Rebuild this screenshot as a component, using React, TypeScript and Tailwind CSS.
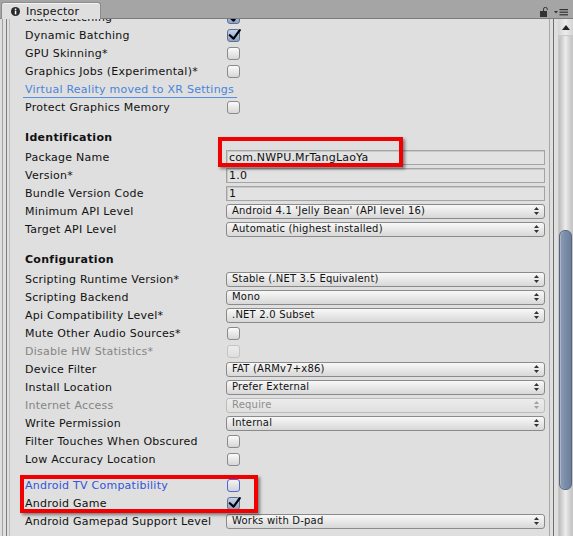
import React from "react";

const font = { fontFamily: '"DejaVu Sans", "Liberation Sans", sans-serif' };

function Arrows({ disabled }: { disabled?: boolean }) {
  const c = disabled ? "#a0a0a0" : "#333";
  return (
    <svg width="5" height="8" viewBox="0 0 5 8" className="shrink-0">
      <polygon points="0,3 2.5,0 5,3" fill={c} />
      <polygon points="0,5 2.5,8 5,5" fill={c} />
    </svg>
  );
}

function Check() {
  return (
    <svg width="13" height="13" viewBox="0 0 13 13" className="absolute -top-[1px] left-0">
      <path d="M1.8 6.2 L5.6 9.6 L11.8 1.2" fill="none" stroke="#000" strokeWidth="2.2" strokeLinecap="round" strokeLinejoin="round" />
    </svg>
  );
}

function Checkbox({ checked, disabled, blue }: { checked?: boolean; disabled?: boolean; blue?: boolean }) {
  if (checked) {
    return (
      <div className="relative ml-[1px] w-[13px] h-[13px] rounded-[3px] border border-[#5f6f8c] bg-gradient-to-b from-[#c4d2ec] to-[#8ea2c8]">
        <Check />
      </div>
    );
  }
  if (disabled) {
    return <div className="ml-[1px] w-[13px] h-[13px] rounded-[3px] border border-[#c4c4c4] bg-gradient-to-b from-[#ececec] to-[#dedede]" />;
  }
  if (blue) {
    return <div className="ml-[1px] w-[13px] h-[13px] rounded-[3px] border border-[#4a66e0] bg-gradient-to-b from-[#f2f2f2] to-[#d4d4d4]" />;
  }
  return <div className="ml-[1px] w-[13px] h-[13px] rounded-[3px] border border-[#8a8a8a] bg-gradient-to-b from-[#fbfbfb] to-[#d6d6d6]" />;
}

function Dropdown({ value, disabled }: { value: string; disabled?: boolean }) {
  return (
    <div
      className={`flex-1 h-[15px] rounded-[3px] border flex items-center justify-between pl-[5px] pr-[5px] text-[10px] leading-none ${
        disabled
          ? "border-[#bcbcbc] bg-gradient-to-b from-[#ececec] to-[#e0e0e0] text-[#8e8e8e]"
          : "border-[#8a8a8a] bg-gradient-to-b from-[#f8f8f8] to-[#d8d8d8] text-[#111]"
      }`}
    >
      <span className="whitespace-nowrap tracking-[0.2px]">{value}</span>
      <Arrows disabled={disabled} />
    </div>
  );
}

function Field({ value }: { value: string }) {
  return (
    <div className="flex-1 h-[15px] border border-[#a4a4a4] bg-[#e2e2e2] shadow-[inset_1px_1px_0_#c8c8c8] flex items-center pl-[2px] text-[11px] leading-none text-[#111]">
      <span className="whitespace-nowrap tracking-[0.2px]">{value}</span>
    </div>
  );
}

function Row({ label, labelClass, children }: { label: React.ReactNode; labelClass?: string; children?: React.ReactNode }) {
  return (
    <div className="flex items-center h-[18px]">
      <div className={`w-[201px] shrink-0 text-[11px] tracking-[0.25px] whitespace-nowrap leading-none ${labelClass ?? "text-[#111]"}`}>{label}</div>
      <div className="flex-1 flex items-center">{children}</div>
    </div>
  );
}

function Header({ text }: { text: string }) {
  return (
    <div className="h-[18px] flex items-center text-[11px] tracking-[0.3px] font-bold text-[#111] leading-none">{text}</div>
  );
}

export default function App() {
  return (
    <div className="relative w-[573px] h-[536px] overflow-hidden bg-[#dfdfdf] flex flex-col" style={font}>
      {/* tab bar */}
      <div className="relative h-[19px] shrink-0 bg-[#a5a5a5] border-b border-[#7c7c7c] flex items-end">
        <div className="relative z-10 ml-[1px] -mb-[1px] h-[17px] w-[100px] bg-[#dfdfdf] border border-b-0 border-[#8c8c8c] rounded-t-[3px] shadow-[inset_0_1px_0_#f4f4f4] flex items-center pl-[9px] gap-[6px]">
          <svg width="9" height="9" viewBox="0 0 9 9" className="shrink-0">
            <circle cx="4.5" cy="4.5" r="4.5" fill="#2a2a2a" />
            <rect x="3.8" y="1.6" width="1.5" height="1.4" fill="#fff" />
            <rect x="3.8" y="3.6" width="1.5" height="3.8" fill="#fff" />
          </svg>
          <span className="text-[11px] tracking-[0.2px] leading-none text-[#111]">Inspector</span>
        </div>
        <div className="absolute right-[5px] top-[7px] flex items-end gap-[6px]">
          <svg width="8" height="10" viewBox="0 0 8 10">
            <path d="M3.5 4 V2.2 A1.9 1.9 0 0 1 7.3 2.2 V3" fill="none" stroke="#333" strokeWidth="1" />
            <rect x="0" y="4" width="7" height="6" fill="#333" />
          </svg>
          <svg width="14" height="7" viewBox="0 0 14 7" className="mb-[1px]">
            <polygon points="0,2 4,2 2,4.5" fill="#333" />
            <rect x="5.5" y="0" width="8.5" height="1.2" fill="#333" />
            <rect x="5.5" y="2.6" width="8.5" height="1.2" fill="#333" />
            <rect x="5.5" y="5.2" width="8.5" height="1.2" fill="#333" />
          </svg>
        </div>
      </div>

      {/* body */}
      <div className="flex flex-1 min-h-0">
        {/* left gutter lines */}
        <div className="w-[10px] shrink-0 flex">
          <div className="w-[2px]" />
          <div className="w-[1px] bg-[#a2a2a2]" />
          <div className="w-[3px]" />
          <div className="w-[1px] bg-[#7c7c7c]" />
          <div className="w-[2px]" />
          <div className="w-[1px] bg-[#bdbdbd]" />
        </div>

        {/* content */}
        <div className="flex-1 min-w-0 overflow-hidden">
          <div className="-mt-[11px] pl-[15px] pr-[3px]">
            <Row label="Static Batching">
              <Checkbox checked />
            </Row>
            <Row label="Dynamic Batching">
              <Checkbox checked />
            </Row>
            <Row label="GPU Skinning*">
              <Checkbox />
            </Row>
            <Row label="Graphics Jobs (Experimental)*">
              <Checkbox />
            </Row>
            <Row
              label={
                <span className="inline-block -ml-[2px] pl-[2px] pr-[3px] leading-[14px] translate-y-[1px] border-b border-[#5a8fe0] text-[#4a84dc]">
                  Virtual Reality moved to XR Settings
                </span>
              }
            />
            <Row label="Protect Graphics Memory">
              <Checkbox />
            </Row>

            <div className="h-[12px]" />
            <Header text="Identification" />
            <div className="h-[2px]" />
            <Row label="Package Name">
              <Field value="com.NWPU.MrTangLaoYa" />
            </Row>
            <Row label="Version*">
              <Field value="1.0" />
            </Row>
            <Row label="Bundle Version Code">
              <Field value="1" />
            </Row>
            <Row label="Minimum API Level">
              <Dropdown value="Android 4.1 'Jelly Bean' (API level 16)" />
            </Row>
            <Row label="Target API Level">
              <Dropdown value="Automatic (highest installed)" />
            </Row>

            <div className="h-[12px]" />
            <Header text="Configuration" />
            <div className="h-[2px]" />
            <Row label="Scripting Runtime Version*">
              <Dropdown value="Stable (.NET 3.5 Equivalent)" />
            </Row>
            <Row label="Scripting Backend">
              <Dropdown value="Mono" />
            </Row>
            <Row label="Api Compatibility Level*">
              <Dropdown value=".NET 2.0 Subset" />
            </Row>
            <Row label="Mute Other Audio Sources*">
              <Checkbox />
            </Row>
            <Row label="Disable HW Statistics*" labelClass="text-[#858585]">
              <Checkbox disabled />
            </Row>
            <Row label="Device Filter">
              <Dropdown value="FAT (ARMv7+x86)" />
            </Row>
            <Row label="Install Location">
              <Dropdown value="Prefer External" />
            </Row>
            <Row label="Internet Access" labelClass="text-[#858585]">
              <Dropdown value="Require" disabled />
            </Row>
            <Row label="Write Permission">
              <Dropdown value="Internal" />
            </Row>
            <Row label="Filter Touches When Obscured">
              <Checkbox />
            </Row>
            <Row label="Low Accuracy Location">
              <Checkbox />
            </Row>
            <div className="h-[8px]" />
            <Row label="Android TV Compatibility" labelClass="text-[#3354d8]">
              <Checkbox blue />
            </Row>
            <Row label="Android Game">
              <Checkbox checked />
            </Row>
            <Row label="Android Gamepad Support Level">
              <Dropdown value="Works with D-pad" />
            </Row>
          </div>
        </div>

        {/* right gutter lines */}
        <div className="w-[10px] shrink-0 flex">
          <div className="w-[1px]" />
          <div className="w-[1px] bg-[#a8a8a8]" />
          <div className="w-[3px]" />
          <div className="w-[1px] bg-[#6e6e6e]" />
          <div className="w-[4px]" />
        </div>

        {/* scrollbar */}
        <div className="w-[15px] shrink-0 flex flex-col bg-gradient-to-r from-[#c6c6c6] via-[#d8d8d8] to-[#c6c6c6]">
          <div className="h-[16px] shrink-0 flex items-center justify-center bg-gradient-to-r from-[#d4d4d4] via-[#ececec] to-[#d4d4d4]">
            <svg width="8" height="5" viewBox="0 0 8 5">
              <polygon points="0,5 4,0 8,5" fill="#222" />
            </svg>
          </div>
          <div className="flex-1 mx-[1px] rounded-t-[6px] bg-gradient-to-r from-[#bcbcbc] via-[#ececec] to-[#c4c4c4] border-t border-[#c8c8c8]">
            <div className="mt-[194px] h-[260px] rounded-[6px] border border-[#56657d] bg-gradient-to-r from-[#8d9db6] via-[#7a8ca8] to-[#6d7f9b] shadow-[inset_1px_0_0_#a9b6ca]" />
          </div>
        </div>
      </div>

      {/* red highlight overlays */}
      <div className="absolute left-[218px] top-[137px] w-[185px] h-[30px] border-[4px] border-[#f00000] shadow-[2px_2px_3px_rgba(0,0,0,0.45)] pointer-events-none" />
      <div className="absolute left-[20px] top-[475px] w-[238px] h-[38px] border-[4px] border-[#f00000] shadow-[2px_2px_3px_rgba(0,0,0,0.45)] pointer-events-none" />
    </div>
  );
}
